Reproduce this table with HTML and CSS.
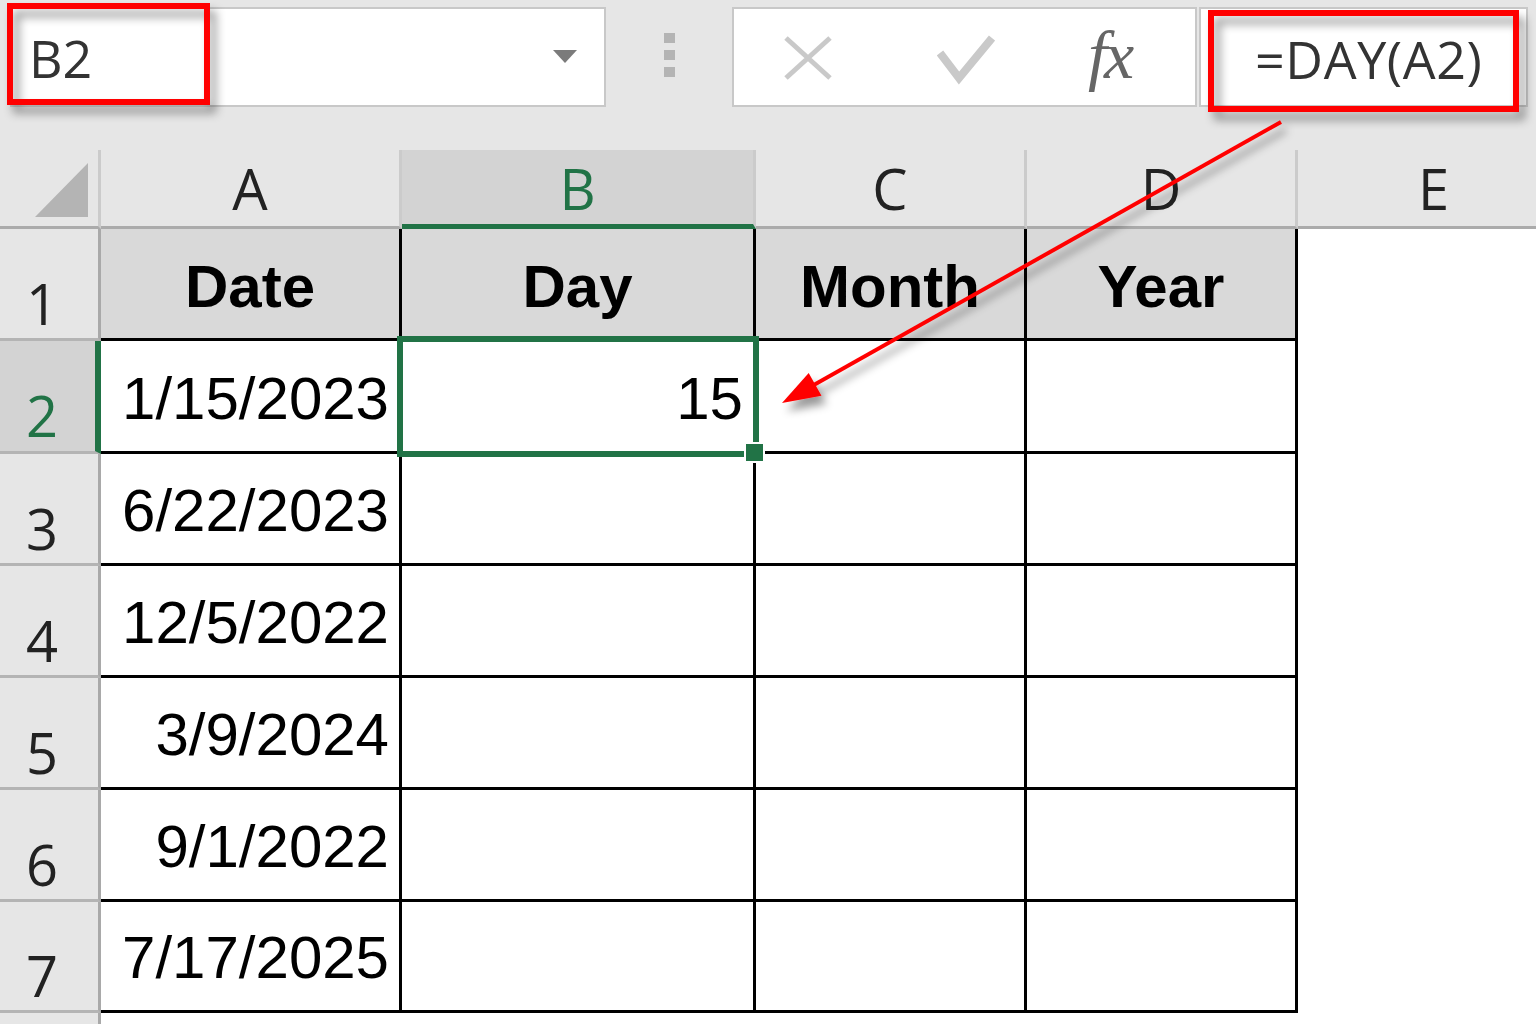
FILE: index.html
```html
<!DOCTYPE html>
<html lang="en">
<head>
<meta charset="utf-8">
<title>DAY function</title>
<link rel="stylesheet" href="styles.css">
</head>
<body>
<div class="app">
  <div class="formula-bar">
    <div class="name-box">
      <span class="name-text">B2</span>
      <svg class="caret" width="24" height="13" viewBox="0 0 24 13"><polygon points="0,0 24,0 12,13" fill="#7b7b7b"/></svg>
    </div>
    <div class="grip"><i></i><i></i><i></i></div>
    <div class="fx-box">
      <svg class="ic-x" width="50" height="46" viewBox="0 0 50 46"><path d="M3 3 L47 43 M47 3 L3 43" stroke="#c9c9c9" stroke-width="5" fill="none"/></svg>
      <svg class="ic-check" width="58" height="52" viewBox="0 0 58 52"><path d="M3 20 L22 45 L55 5" stroke="#c9c9c9" stroke-width="8" fill="none"/></svg>
      <span class="fx">fx</span>
    </div>
    <div class="formula-input"><span class="formula-text">=DAY(A2)</span></div>
  </div>

  <div class="sheet">
    <div class="corner"><div class="tri"></div></div>
    <div class="colhead">A</div>
    <div class="colhead active">B</div>
    <div class="colhead">C</div>
    <div class="colhead">D</div>
    <div class="colhead last">E</div>

    <div class="rowhead">1</div>
    <div class="cell hdr">Date</div>
    <div class="cell hdr">Day</div>
    <div class="cell hdr">Month</div>
    <div class="cell hdr">Year</div>
    <div class="blank"></div>

    <div class="rowhead active">2</div>
    <div class="cell num">1/15/2023</div>
    <div class="cell num selected">15<div class="selection"><div class="handle"></div></div></div>
    <div class="cell"></div>
    <div class="cell"></div>
    <div class="blank"></div>

    <div class="rowhead">3</div>
    <div class="cell num">6/22/2023</div>
    <div class="cell"></div>
    <div class="cell"></div>
    <div class="cell"></div>
    <div class="blank"></div>

    <div class="rowhead">4</div>
    <div class="cell num">12/5/2022</div>
    <div class="cell"></div>
    <div class="cell"></div>
    <div class="cell"></div>
    <div class="blank"></div>

    <div class="rowhead">5</div>
    <div class="cell num">3/9/2024</div>
    <div class="cell"></div>
    <div class="cell"></div>
    <div class="cell"></div>
    <div class="blank"></div>

    <div class="rowhead">6</div>
    <div class="cell num">9/1/2022</div>
    <div class="cell"></div>
    <div class="cell"></div>
    <div class="cell"></div>
    <div class="blank"></div>

    <div class="rowhead">7</div>
    <div class="cell num">7/17/2025</div>
    <div class="cell"></div>
    <div class="cell"></div>
    <div class="cell"></div>
    <div class="blank"></div>

    <div class="rowhead tail"></div>
    <div class="blank"></div>
    <div class="blank"></div>
    <div class="blank"></div>
    <div class="blank"></div>
    <div class="blank"></div>
  </div>

  <div class="callout callout-name"></div>
  <div class="callout callout-formula"></div>

  <svg class="arrow" width="1536" height="1024" viewBox="0 0 1536 1024">
    <defs>
      <filter id="sh" x="-20%" y="-20%" width="150%" height="150%">
        <feDropShadow dx="5" dy="8" stdDeviation="4" flood-color="#000" flood-opacity="0.4"/>
      </filter>
    </defs>
    <g filter="url(#sh)">
      <line x1="1281" y1="122" x2="812" y2="386" stroke="#ff0000" stroke-width="4"/>
      <polygon points="782,403 821.5,395.7 808.7,373.1" fill="#ff0000"/>
    </g>
  </svg>
</div>
</body>
</html>
```

FILE: styles.css
```css
* { box-sizing: border-box; }

html, body {
  margin: 0;
  padding: 0;
  width: 1536px;
  height: 1024px;
  overflow: hidden;
  background: #e6e6e6;
}

.app {
  position: relative;
  width: 1536px;
  height: 1024px;
  overflow: hidden;
  display: flex;
  flex-direction: column;
  font-family: "Open Sans", "Noto Sans", sans-serif;
}

/* ---------- formula bar ---------- */
.formula-bar {
  height: 150px;
  flex: none;
  display: flex;
  align-items: flex-start;
  padding-top: 7px;
}

.name-box {
  margin-left: 10px;
  width: 596px;
  height: 100px;
  background: #fff;
  border: 2px solid #c8c8c8;
  display: flex;
  align-items: center;
  justify-content: space-between;
  padding: 0 27px 0 17px;
}

.name-text {
  font-size: 52px;
  line-height: 52px;
  color: #333;
  margin-top: 2px;
}

.caret { display: block; margin-top: -2px; }

.grip {
  margin-left: 58px;
  margin-top: 26px;
  display: flex;
  flex-direction: column;
  gap: 7px;
}
.grip i {
  display: block;
  width: 11px;
  height: 10px;
  background: #b4b4b4;
}

.fx-box {
  margin-left: 57px;
  width: 465px;
  height: 100px;
  background: #fff;
  border: 2px solid #c8c8c8;
  display: flex;
  align-items: center;
}
.ic-x { display: block; margin-left: 49px; margin-top: 1px; }
.ic-check { display: block; margin-left: 104px; margin-top: 4px; }
.fx {
  margin-left: 93px;
  font-family: "Liberation Serif", "DejaVu Serif", serif;
  font-style: italic;
  font-size: 68px;
  line-height: 68px;
  color: #666;
  letter-spacing: -3px;
  margin-top: -4px;
}

.formula-input {
  margin-left: 2px;
  width: 329px;
  height: 100px;
  background: #fff;
  border: 2px solid #c8c8c8;
  display: flex;
  align-items: center;
  padding-left: 54px;
}
.formula-text {
  font-size: 52px;
  line-height: 52px;
  color: #333;
  margin-top: 4px;
  letter-spacing: 0.6px;
  white-space: nowrap;
}

/* ---------- sheet ---------- */
.sheet {
  flex: 1;
  min-height: 0;
  overflow: hidden;
  display: grid;
  grid-template-columns: 101px 301px 354px 271px 271px 271px;
  grid-template-rows: 79px 112px 113px 112px 112px 112px 112px 111px 11px;
  background: #fff;
}

.corner {
  background: #e6e6e6;
  border-right: 3px solid #cbcbcb;
  border-bottom: 3px solid #ababab;
  display: flex;
  align-items: flex-end;
  justify-content: flex-end;
  padding: 0 10px 9px 0;
}
.tri {
  width: 0;
  height: 0;
  border-left: 53px solid transparent;
  border-bottom: 54px solid #b4b4b4;
}

.colhead {
  background: #e6e6e6;
  border-right: 3px solid #cbcbcb;
  border-bottom: 3px solid #ababab;
  display: flex;
  align-items: flex-end;
  justify-content: center;
  font-size: 56px;
  line-height: 56px;
  color: #222;
  padding-bottom: 10px;
}
.colhead.active {
  background: #d3d3d3;
  color: #217346;
  border-bottom: 5px solid #217346;
  padding-bottom: 8px;
}
.colhead.last { border-right: none; }

.rowhead {
  background: #e6e6e6;
  border-right: 3px solid #a9a9a9;
  border-bottom: 3px solid #b4b4b4;
  display: flex;
  align-items: flex-end;
  justify-content: center;
  padding: 0 14px 7px 0;
  font-size: 56px;
  line-height: 56px;
  color: #222;
}
.rowhead.active {
  background: #d3d3d3;
  color: #217346;
  border-right: 6px solid #217346;
  padding-right: 11px;
  padding-bottom: 8px;
}
.rowhead.tail { border-bottom: none; }

.cell {
  background: #fff;
  border-right: 3px solid #000;
  border-bottom: 3px solid #000;
  display: flex;
  align-items: flex-end;
  padding: 0 10px 22px 10px;
  font-family: "Liberation Sans", Arial, sans-serif;
  font-size: 60px;
  line-height: 60px;
  color: #000;
  white-space: nowrap;
}
.cell.hdr {
  background: #d9d9d9;
  font-weight: bold;
  justify-content: center;
  padding-bottom: 21px;
}
.cell.num { justify-content: flex-end; }

.cell.selected { position: relative; }
.selection {
  position: absolute;
  left: -5px;
  top: -5px;
  width: 362px;
  height: 121px;
  border: 6px solid #217346;
}
.handle {
  position: absolute;
  left: 341px;
  top: 100px;
  width: 21px;
  height: 21px;
  background: #217346;
  border: 2px solid #fff;
}

.blank { background: #fff; }

/* ---------- annotations ---------- */
.callout {
  position: absolute;
  border: 6px solid #ff0000;
  filter: drop-shadow(6px 8px 5px rgba(0, 0, 0, 0.4));
}
.callout-name {
  left: 7px;
  top: 3px;
  width: 203px;
  height: 102px;
}
.callout-formula {
  left: 1208px;
  top: 10px;
  width: 311px;
  height: 102px;
}

.arrow {
  position: absolute;
  left: 0;
  top: 0;
  pointer-events: none;
}
```
